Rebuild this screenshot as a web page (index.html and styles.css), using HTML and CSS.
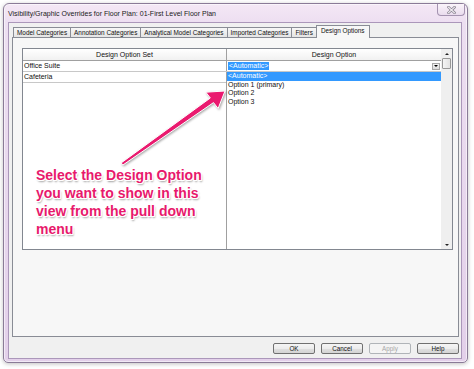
FILE: index.html
```html
<!DOCTYPE html>
<html>
<head>
<meta charset="utf-8">
<title>Visibility/Graphic Overrides</title>
<link rel="stylesheet" href="styles.css">
</head>
<body>
<div class="window">
  <div class="titlebar">
    <span class="title">Visibility/Graphic Overrides for Floor Plan: 01-First Level Floor Plan</span>
    <div class="close">
      <svg width="9" height="8" viewBox="0 0 9 8"><path d="M1.5 1.2 L7.5 6.8 M7.5 1.2 L1.5 6.8" stroke="#8d8794" stroke-width="2.6" stroke-linecap="square" fill="none"/><path d="M1.5 1.2 L7.5 6.8 M7.5 1.2 L1.5 6.8" stroke="#f6f2f7" stroke-width="1.1" stroke-linecap="square" fill="none"/></svg>
    </div>
  </div>
  <div class="client">
    <div class="tabs">
      <div class="tab">Model Categories</div>
      <div class="tab">Annotation Categories</div>
      <div class="tab">Analytical Model Categories</div>
      <div class="tab">Imported Categories</div>
      <div class="tab">Filters</div>
      <div class="tab active">Design Options</div>
    </div>
    <div class="panel">
      <div class="grid">
        <div class="gmain">
          <div class="row head">
            <div class="cell c1">Design Option Set</div>
            <div class="cell c2">Design Option</div>
          </div>
          <div class="row">
            <div class="cell c1">Office Suite</div>
            <div class="cell c2 combo"><span class="sel">&lt;Automatic&gt;</span><span class="dropbtn"><span class="tri"></span></span></div>
          </div>
          <div class="row">
            <div class="cell c1">Cafeteria</div>
            <div class="cell c2"></div>
          </div>
          <div class="fill">
            <div class="c1"></div>
            <div class="c2"></div>
          </div>
          <div class="list">
            <div class="item hl">&lt;Automatic&gt;</div>
            <div class="item">Option 1 (primary)</div>
            <div class="item">Option 2</div>
            <div class="item">Option 3</div>
          </div>
        </div>
        <div class="vscroll">
          <div class="sbtn"><span class="up"></span></div>
          <div class="thumb"></div>
          <div class="track"></div>
          <div class="sbtn"><span class="down"></span></div>
        </div>
      </div>
    </div>
    <div class="buttons">
      <div class="btn">OK</div>
      <div class="btn">Cancel</div>
      <div class="btn disabled">Apply</div>
      <div class="btn">Help</div>
    </div>
  </div>
</div>
<svg class="arrow" width="135" height="95" viewBox="100 80 135 95">
  <polygon points="121.2,162.9 210.3,98.0 205.8,92.2 225,91 218.1,108.5 213.5,102.6 122.8,165.1" fill="#ea1a6f" stroke="#ffffff" stroke-width="1" stroke-linejoin="round"/>
</svg>
<div class="callout">Select the Design Option<br>you want to show in this<br>view from the pull down<br>menu</div>
</body>
</html>
```
FILE: styles.css
```css
* { box-sizing: border-box; }
html, body { margin: 0; padding: 0; }
body {
  position: relative;
  width: 474px;
  height: 369px;
  overflow: hidden;
  background: #ffffff;
  font-family: "Liberation Sans", Arial, sans-serif;
  color: #111;
}

.window {
  margin: 3px 0 0 3px;
  width: 465px;
  height: 360px;
  border: 1px solid #8a7b97;
  border-radius: 6px 6px 5px 5px;
  background: linear-gradient(180deg, #f4e8f5 0%, #eddff1 18px, #e3d0ea 100%);
  box-shadow: 0 1px 4px rgba(0, 0, 0, 0.25), inset 0 0 0 1px rgba(255, 255, 255, 0.55);
  display: flex;
  flex-direction: column;
}

.titlebar {
  height: 18px;
  display: flex;
  align-items: center;
  padding-left: 4px;
}
.title { font-size: 7px; color: #1a1a1a; }
.close {
  align-self: flex-start;
  margin-left: auto;
  margin-right: 2px;
  width: 28px;
  height: 12px;
  border: 1px solid #a493b0;
  border-top: none;
  border-radius: 0 0 4px 4px;
  background: linear-gradient(#faf4fa, #eadcee);
  display: flex;
  align-items: center;
  justify-content: center;
}
.close svg { display: block; }

.client {
  margin: 0 5px 0 4px;
  height: 337px;
  border: 1px solid #ab97ba;
  background: #f0f0f0;
  padding: 2px 2px 0 3px;
  display: flex;
  flex-direction: column;
}

.tabs {
  height: 12px;
  display: flex;
  align-items: flex-end;
  padding-left: 1px;
  position: relative;
  z-index: 1;
}
.tab {
  height: 10px;
  padding: 0 3px;
  margin-right: -1px;
  font-size: 6.4px;
  line-height: 9px;
  white-space: nowrap;
  border: 1px solid #898c95;
  border-bottom: none;
  background: linear-gradient(#f7f7f7, #e4e4e4);
}
.tab.active {
  height: 13px;
  margin-bottom: -1px;
  line-height: 10px;
  padding: 0 4px;
  background: #f7f7f7;
}

.panel {
  height: 300px;
  border: 1px solid #898c95;
  background: #f7f7f7;
  padding: 10px 0 0 9px;
}

.grid {
  width: 431px;
  height: 202px;
  border: 1px solid #828790;
  background: #ffffff;
  display: flex;
}
.gmain {
  width: 418px;
  position: relative;
  display: flex;
  flex-direction: column;
}
.row {
  display: flex;
  height: 11px;
  border-bottom: 1px solid #c8c8c8;
  font-size: 7px;
  line-height: 10px;
}
.row.head {
  height: 12px;
  line-height: 11px;
  background: linear-gradient(#ffffff, #f1f1f1);
  border-bottom: 1px solid #a0a0a0;
}
.cell { white-space: nowrap; }
.c1 {
  width: 204px;
  border-right: 1px solid #a0a0a0;
  padding-left: 1px;
}
.c2 { flex: 1; }
.head .cell { text-align: center; padding-left: 0; }

.combo {
  display: flex;
  align-items: center;
  padding: 0 1px;
}
.sel {
  background: #3399ff;
  color: #ffffff;
  line-height: 8px;
  padding: 0 1px;
}
.dropbtn {
  margin-left: auto;
  width: 8px;
  height: 7px;
  border: 1px solid #a8a8a8;
  background: linear-gradient(#f4f4f4, #dcdcdc);
  display: flex;
  align-items: center;
  justify-content: center;
}
.tri {
  width: 0;
  height: 0;
  border-left: 2px solid transparent;
  border-right: 2px solid transparent;
  border-top: 2px solid #000;
}

.fill { flex: 1; display: flex; }
.fill .c1 { padding: 0; }

.list {
  position: absolute;
  left: 203px;
  top: 23px;
  width: 215px;
  height: 36px;
  border-left: 1px solid #a0a0a0;
  background: #ffffff;
}
.item {
  height: 8.5px;
  line-height: 8.5px;
  font-size: 7px;
  padding-left: 1px;
  white-space: nowrap;
}
.item.hl { background: #3399ff; color: #ffffff; }

.vscroll {
  width: 11px;
  background: #efefef;
  display: flex;
  flex-direction: column;
  align-items: center;
}
.sbtn {
  width: 9px;
  height: 9px;
  display: flex;
  align-items: center;
  justify-content: center;
}
.up, .down {
  width: 0;
  height: 0;
  border-left: 2px solid transparent;
  border-right: 2px solid transparent;
}
.up { border-bottom: 2px solid #222; }
.down { border-top: 2px solid #222; }
.thumb {
  width: 9px;
  height: 11px;
  border: 1px solid #979797;
  border-radius: 1px;
  background: linear-gradient(90deg, #f4f4f4, #e2e2e2);
}
.track { flex: 1; }

.buttons {
  display: flex;
  justify-content: flex-end;
  gap: 6px;
  margin-top: 6px;
}
.btn {
  width: 42px;
  height: 11px;
  border: 1px solid #707070;
  border-radius: 2px;
  background: linear-gradient(#f5f5f5 0%, #ececec 50%, #e0e0e0 51%, #d4d4d4 100%);
  font-size: 6.3px;
  line-height: 9px;
  text-align: center;
}
.btn.disabled {
  color: #a6a6a6;
  border-color: #b0b4b8;
  background: #f4f4f4;
}

.arrow {
  position: absolute;
  left: 100px;
  top: 80px;
  filter: drop-shadow(1px 1px 1px rgba(0, 0, 0, 0.35));
}
.callout {
  position: absolute;
  left: 36px;
  top: 166px;
  font-family: "Liberation Sans", Arial, sans-serif;
  font-weight: bold;
  font-size: 14px;
  line-height: 18px;
  color: #e8196c;
  white-space: nowrap;
  text-shadow:
    1px 0 0 #fff, -1px 0 0 #fff, 0 1px 0 #fff, 0 -1px 0 #fff,
    1px 1px 0 #fff, -1px -1px 0 #fff, 1px -1px 0 #fff, -1px 1px 0 #fff,
    1px 2px 2px rgba(0, 0, 0, 0.4);
}
```
